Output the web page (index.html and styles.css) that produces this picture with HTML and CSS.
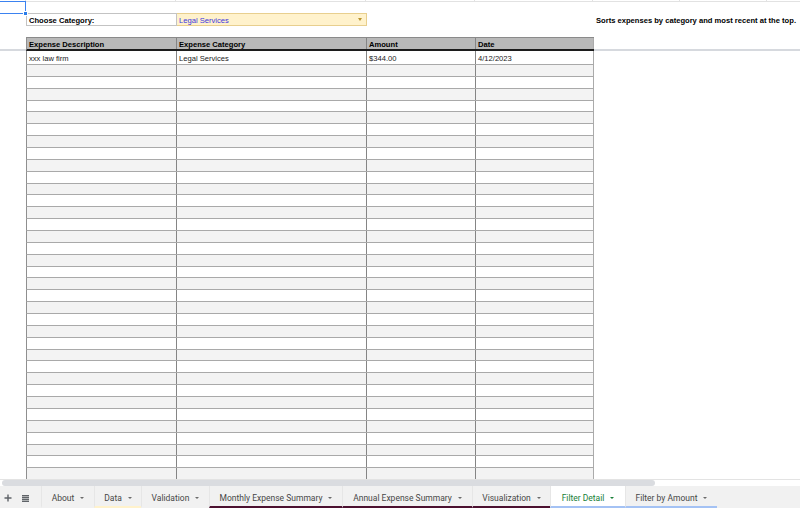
FILE: index.html
```html
<!DOCTYPE html>
<html>
<head>
<meta charset="utf-8">
<link rel="stylesheet" href="styles.css">
</head>
<body>
<div class="app">
  <div class="grid">
    <div class="row r0">
      <div class="c ca"></div><div class="c cb"></div><div class="c cc"></div><div class="c cd"></div><div class="c ce"></div><div class="c cf"></div><div class="c cg"></div><div class="c ch"></div>
    </div>
    <div class="row r1">
      <div class="ca"></div>
    </div>
    <div class="row r2">
      <div class="ca"></div>
      <div class="label-cell">Choose Category:</div>
      <div class="drop-cell"><span>Legal Services</span><span class="drop-arrow"></span></div>
      <div class="note">Sorts expenses by category and most recent at the top.</div>
    </div>
    <div class="row r3"></div>
    <div class="row head">
      <div class="ca fill"></div>
      <div class="tbl-row">
        <div class="t t1">Expense Description</div>
        <div class="t t2">Expense Category</div>
        <div class="t t3">Amount</div>
        <div class="t t4">Date</div>
      </div>
      <div class="fill rest"></div>
    </div>
    <div class="body" id="body">
      <div class="row data first">
        <div class="ca"></div>
        <div class="tbl-row">
          <div class="t t1">xxx law firm</div>
          <div class="t t2">Legal Services</div>
          <div class="t t3">$344.00</div>
          <div class="t t4">4/12/2023</div>
        </div>
      </div>
    </div>
    <div class="selection"><span class="handle"></span></div>
  </div>
  <div class="hscroll"><div class="thumb"></div></div>
  <div class="tabbar">
    <div class="tool plus"><svg width="8" height="8" viewBox="0 0 8 8"><path d="M4 0.5V7.5M0.5 4H7.5" stroke="#5f6368" stroke-width="1.4"/></svg></div>
    <div class="tool list"><svg width="7" height="7" viewBox="0 0 7 7"><rect x="0" y="0" width="7" height="1.4" fill="#5f6368"/><rect x="0" y="1.9" width="7" height="1.4" fill="#5f6368"/><rect x="0" y="3.8" width="7" height="1.4" fill="#5f6368"/><rect x="0" y="5.7" width="7" height="1.3" fill="#5f6368"/></svg></div>
    <div class="tabs">
      <div class="tab w-about">About<span class="caret"></span></div>
      <div class="tab w-data u-yellow">Data<span class="caret"></span></div>
      <div class="tab w-valid">Validation<span class="caret"></span></div>
      <div class="tab w-month u-maroon">Monthly Expense Summary<span class="caret"></span></div>
      <div class="tab w-annual u-maroon">Annual Expense Summary<span class="caret"></span></div>
      <div class="tab w-vis u-maroon">Visualization<span class="caret"></span></div>
      <div class="tab w-filter active u-blue">Filter Detail<span class="caret"></span></div>
      <div class="tab w-amount u-blue">Filter by Amount<span class="caret"></span></div>
    </div>
  </div>
</div>
<script>
  var body = document.getElementById('body');
  for (var i = 2; i <= 36; i++) {
    var r = document.createElement('div');
    r.className = 'row data' + (i % 2 === 0 ? ' alt' : '');
    r.innerHTML = '<div class="ca"></div><div class="tbl-row"><div class="t t1"></div><div class="t t2"></div><div class="t t3"></div><div class="t t4"></div></div>';
    body.appendChild(r);
  }
</script>
</body>
</html>
```
FILE: styles.css
```css
* { box-sizing: border-box; }
html, body { margin: 0; padding: 0; }
body {
  width: 800px;
  height: 509px;
  overflow: hidden;
  background: #fff;
  font-family: "Liberation Sans", Arial, sans-serif;
}
.app { width: 800px; height: 509px; display: flex; flex-direction: column; }
.grid { position: relative; height: 480px; overflow: hidden; background: #fff; border-bottom: 1px solid #e3e3e3; }
.row { display: flex; }
.c { height: 100%; border-right: 1px solid #e2e2e2; }
.r0 { height: 2px; border-bottom: 1px solid #e2e2e2; }
.ca { width: 26px; flex: none; }
.cb { width: 150px; }
.cc { width: 190px; }
.cd { width: 109px; }
.ce { width: 118px; }
.cf { width: 87px; }
.cg { width: 87px; }
.ch { flex: 1; border-right: none; }
.r1 { height: 11px; }
.r2 { height: 13px; align-items: stretch; }
.label-cell {
  width: 151px;
  border: 1px solid #c3c3c3;
  font-size: 7.6px;
  font-weight: bold;
  color: #000;
  padding-left: 2px;
  display: flex;
  align-items: center;
  padding-top: 1px;
}
.drop-cell {
  width: 190px;
  background: #fff2cc;
  border: 1px solid #e8cf8e;
  border-left: none;
  font-size: 7.6px;
  color: #3d36df;
  padding-left: 2px;
  padding-right: 4px;
  display: flex;
  align-items: center;
  justify-content: space-between;
  padding-top: 1px;
}
.drop-arrow {
  width: 0; height: 0;
  border-left: 2.5px solid transparent;
  border-right: 2.5px solid transparent;
  border-top: 3px solid #b8942e;
  margin-top: -1px;
}
.note {
  flex: 1;
  text-align: right;
  font-size: 7.6px;
  font-weight: bold;
  color: #000;
  padding-right: 4px;
  display: flex;
  align-items: center;
  justify-content: flex-end;
  padding-top: 1px;
}
.r3 { height: 11px; }
.head { height: 14px; }
.head .fill { border-bottom: 2px solid #d6d9de; }
.head .rest { flex: 1; }
.tbl-row { display: flex; border-left: 1px solid #8f8f8f; }
.head .tbl-row {
  background: #b9b9b9;
  border-top: 1px solid #8a8a8a;
  border-bottom: 2px solid #1c1c1c;
}
.t {
  border-right: 1px solid #858585;
  font-size: 7.6px;
  padding-left: 2px;
  display: flex;
  align-items: center;
  white-space: nowrap;
  overflow: hidden;
}
.head .t { font-weight: bold; color: #000; padding-top: 1px; }
.t1 { width: 150px; }
.t2 { width: 190px; }
.t3 { width: 109px; }
.t4 { width: 118px; border-right-color: #ababab; }
.data { height: 11.866px; }
.data.first { height: 14px; }
.data .tbl-row { border-bottom: 1px solid #a9a9a9; background: #fff; }
.data.alt .tbl-row { background: #f3f3f3; }
.data .t { color: #222; padding-top: 1px; }
.selection {
  position: absolute;
  left: 0; top: 1px;
  width: 26px; height: 13px;
  border: 1px solid #3b82f0;
  border-left: none;
}
.handle {
  position: absolute;
  right: -3px; bottom: -3px;
  width: 5px; height: 5px;
  background: #2b7de9;
  border: 1px solid #fff;
}
.hscroll { height: 6px; padding: 0 0 0 2px; background: #fff; }
.thumb { width: 653px; height: 6px; background: #dadce0; border-radius: 3px; }
.tabbar {
  height: 22px;
  background: #f1f1f1;
  display: flex;
  align-items: stretch;
  font-family: Roboto, "Noto Sans", sans-serif;
  font-weight: 400;
}
.tool { display: flex; align-items: center; justify-content: center; padding-top: 2px; }
.plus { width: 14px; padding-left: 1px; }
.list { width: 21px; padding-left: 2px; }
.tabs { display: flex; padding-left: 6px; }
.tab {
  font-size: 8.5px;
  color: #474747;
  display: flex;
  align-items: center;
  justify-content: center;
  gap: 6px;
  border-left: 1px solid #e6e6e6;
  border-bottom: 2px solid transparent;
  padding-top: 4px;
  white-space: nowrap;
}
.caret {
  width: 0; height: 0;
  border-left: 2.5px solid transparent;
  border-right: 2.5px solid transparent;
  border-top: 2.5px solid #6b6b6b;
}
.w-about { width: 53px; }
.w-data { width: 47px; }
.w-valid { width: 68px; }
.w-month { width: 133px; }
.w-annual { width: 130px; }
.w-vis { width: 78px; }
.w-filter { width: 75px; }
.w-amount { width: 92px; }
.u-yellow { border-bottom-color: #fff2cc; }
.u-maroon { border-bottom-color: #4c1130; }
.u-blue { border-bottom-color: #a4c2f4; }
.tab.active { background: #fff; color: #188038; }
.tab.active .caret { border-top-color: #188038; }
```
